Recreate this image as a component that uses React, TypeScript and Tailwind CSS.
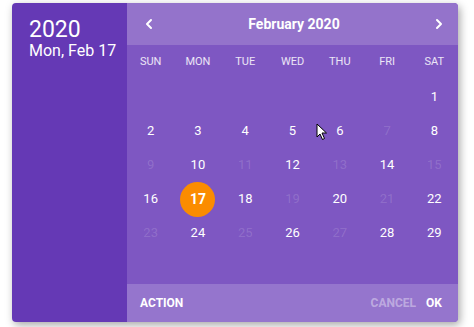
import React from 'react';
import { ChevronLeft, ChevronRight } from 'lucide-react';

const weekDays = ['SUN', 'MON', 'TUE', 'WED', 'THU', 'FRI', 'SAT'];
const enabled = [1, 2, 3, 4, 5, 6, 8, 10, 12, 14, 16, 17, 18, 20, 22, 24, 26, 28, 29];

export default function App() {
  // Feb 2020 starts on a Saturday -> 6 blank cells
  const cells: (number | null)[] = [...Array(6).fill(null), ...Array.from({ length: 29 }, (_, i) => i + 1)];
  while (cells.length < 42) cells.push(null);

  return (
    <div className="w-[474px] h-[327px] bg-white pt-[3px] pl-[12px]" style={{ fontFamily: 'Roboto, "Liberation Sans", sans-serif' }}>
      <div className="relative w-[446px] h-[319px] flex rounded-[4px] overflow-hidden shadow-[2px_3px_9px_rgba(0,0,0,0.35)]">
        {/* Date header */}
        <div className="w-[115px] bg-[#6539b5] text-white pl-[17px] pt-[14px]">
          <div className="text-[23px] leading-[26px]">2020</div>
          <div className="text-[16px] leading-[20px] mt-[-2px]">Mon, Feb 17</div>
        </div>

        {/* Calendar */}
        <div className="flex-1 flex flex-col bg-[#7e57c2] text-white">
          <div className="h-[42px] bg-[#9473cb] flex items-center justify-between pl-[14px] pr-[11px]">
            <ChevronLeft className="w-[16px] h-[16px]" strokeWidth={3} />
            <span className="text-[14px] font-bold">February 2020</span>
            <ChevronRight className="w-[16px] h-[16px]" strokeWidth={3} />
          </div>

          <div className="grid grid-cols-7 h-[35px] items-center text-[11px] text-white/85 text-center">
            {weekDays.map((d) => (
              <span key={d}>{d}</span>
            ))}
          </div>

          <div className="grid grid-cols-7 grid-rows-6 h-[204px]">
            {cells.map((n, i) => (
              <div key={i} className="flex items-center justify-center">
                {n === 17 ? (
                  <span className="w-[35px] h-[35px] rounded-full bg-[#fb8c00] flex items-center justify-center text-[14px] font-bold">
                    17
                  </span>
                ) : n ? (
                  <span className={`text-[13px] ${enabled.includes(n) ? 'text-white' : 'text-white/15'}`}>{n}</span>
                ) : null}
              </div>
            ))}
          </div>

          <div className="flex-1 bg-[#9575cd] flex items-center justify-between pl-[13px] pr-[16px] text-[12px] font-bold">
            <span>ACTION</span>
            <div className="flex gap-[10px]">
              <span className="text-white/40">CANCEL</span>
              <span>OK</span>
            </div>
          </div>
        </div>

        {/* mouse pointer */}
        <svg className="absolute left-[304px] top-[120px]" width="12" height="18" viewBox="0 0 12 18">
          <path d="M1 1 L1 14 L4 11 L6.5 16.5 L8.5 15.5 L6 10 L10.5 10 Z" fill="white" stroke="black" strokeWidth="1" />
        </svg>
      </div>
    </div>
  );
}
